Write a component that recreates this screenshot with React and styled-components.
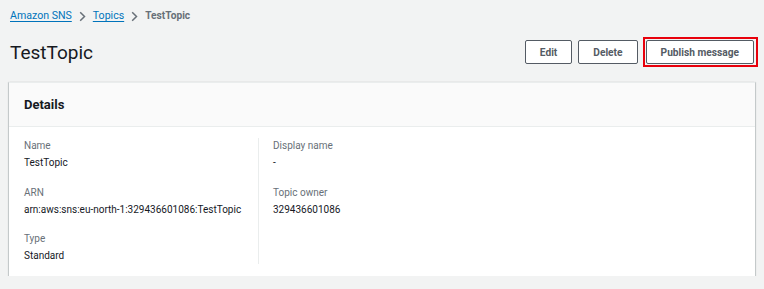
import React from "react";
import styled, { createGlobalStyle } from "styled-components";

const Global = createGlobalStyle`
  html, body { margin: 0; padding: 0; background: #f2f3f3; }
  body { font-family: Roboto, "Noto Sans", Arial, sans-serif; color: #16191f; }
  * { box-sizing: border-box; }
`;

const Page = styled.div`
  padding: 8px 6px 0 9px;
  width: 764px;
`;

const Crumbs = styled.nav`
  display: flex;
  align-items: center;
  gap: 7px;
  font-size: 10.6px;
  line-height: 16px;
  padding-left: 1px;
`;

const Crumb = styled.a`
  color: #0073bb;
  text-decoration: underline;
  text-underline-offset: 2px;
`;

const Current = styled.span`
  color: #687078;
  font-weight: 700;
  font-size: 10.2px;
`;

const Chevron = () => (
  <svg width="7" height="11" viewBox="0 0 7 11">
    <path d="M1.2 1.2 L5.5 5.5 L1.2 9.8" fill="none" stroke="#687078" strokeWidth="1.5" />
  </svg>
);

const Header = styled.div`
  display: flex;
  align-items: center;
  justify-content: space-between;
  margin-top: 13px;
`;

const Title = styled.h1`
  margin: 0;
  font-size: 19px;
  font-weight: 400;
  line-height: 26px;
  padding-left: 1px;
  padding-top: 1px;
  color: #16191f;
`;

const Actions = styled.div`
  display: flex;
  align-items: center;
  gap: 6px;
`;

const Button = styled.button`
  height: 24px;
  padding: 0 14px;
  background: #fff;
  border: 1px solid #545b64;
  border-radius: 2px;
  font-family: inherit;
  font-size: 10.2px;
  font-weight: 700;
  color: #545b64;
  cursor: pointer;
`;

const Highlight = styled.div`
  border: 2px solid #e8000b;
  padding: 1px 2px 1px 1px;
  display: flex;
  margin-left: -1px;
`;

const Card = styled.section`
  margin-top: 15px;
  width: 746px;
  background: #fff;
  box-shadow: 0 1px 1px 0 rgba(0, 28, 36, 0.45), 1px 0 1px 0 rgba(0, 28, 36, 0.12),
    -1px 0 1px 0 rgba(0, 28, 36, 0.12);
  border-top: 1px solid #eaeded;
`;

const CardHead = styled.div`
  background: #fafafa;
  border-bottom: 1px solid #eaeded;
  height: 44px;
  display: flex;
  align-items: center;
  padding-left: 15px;
`;

const CardTitle = styled.h2`
  margin: 0;
  font-size: 13px;
  font-weight: 700;
  color: #16191f;
`;

const CardBody = styled.div`
  display: grid;
  grid-template-columns: 234px 1fr;
  padding: 11px 15px 12px 15px;
`;

const Column = styled.div`
  display: flex;
  flex-direction: column;
  gap: 13.5px;
  padding-left: ${(p) => (p.$divided ? "14px" : "0")};
  border-left: ${(p) => (p.$divided ? "1px solid #eaeded" : "none")};
`;

const Field = styled.div`
  display: flex;
  flex-direction: column;
  gap: 1px;
`;

const Label = styled.div`
  font-size: 10px;
  line-height: 16px;
  color: #687078;
`;

const Value = styled.div`
  font-size: 10px;
  line-height: 16px;
  color: #16191f;
`;

export default function App() {
  return (
    <Page>
      <Global />
      <Crumbs>
        <Crumb href="#">Amazon SNS</Crumb>
        <Chevron />
        <Crumb href="#">Topics</Crumb>
        <Chevron />
        <Current>TestTopic</Current>
      </Crumbs>
      <Header>
        <Title>TestTopic</Title>
        <Actions>
          <Button>Edit</Button>
          <Button>Delete</Button>
          <Highlight>
            <Button>Publish message</Button>
          </Highlight>
        </Actions>
      </Header>
      <Card>
        <CardHead>
          <CardTitle>Details</CardTitle>
        </CardHead>
        <CardBody>
          <Column>
            <Field>
              <Label>Name</Label>
              <Value>TestTopic</Value>
            </Field>
            <Field>
              <Label>ARN</Label>
              <Value>arn:aws:sns:eu-north-1:329436601086:TestTopic</Value>
            </Field>
            <Field>
              <Label>Type</Label>
              <Value>Standard</Value>
            </Field>
          </Column>
          <Column $divided>
            <Field>
              <Label>Display name</Label>
              <Value>-</Value>
            </Field>
            <Field>
              <Label>Topic owner</Label>
              <Value>329436601086</Value>
            </Field>
          </Column>
        </CardBody>
      </Card>
    </Page>
  );
}
